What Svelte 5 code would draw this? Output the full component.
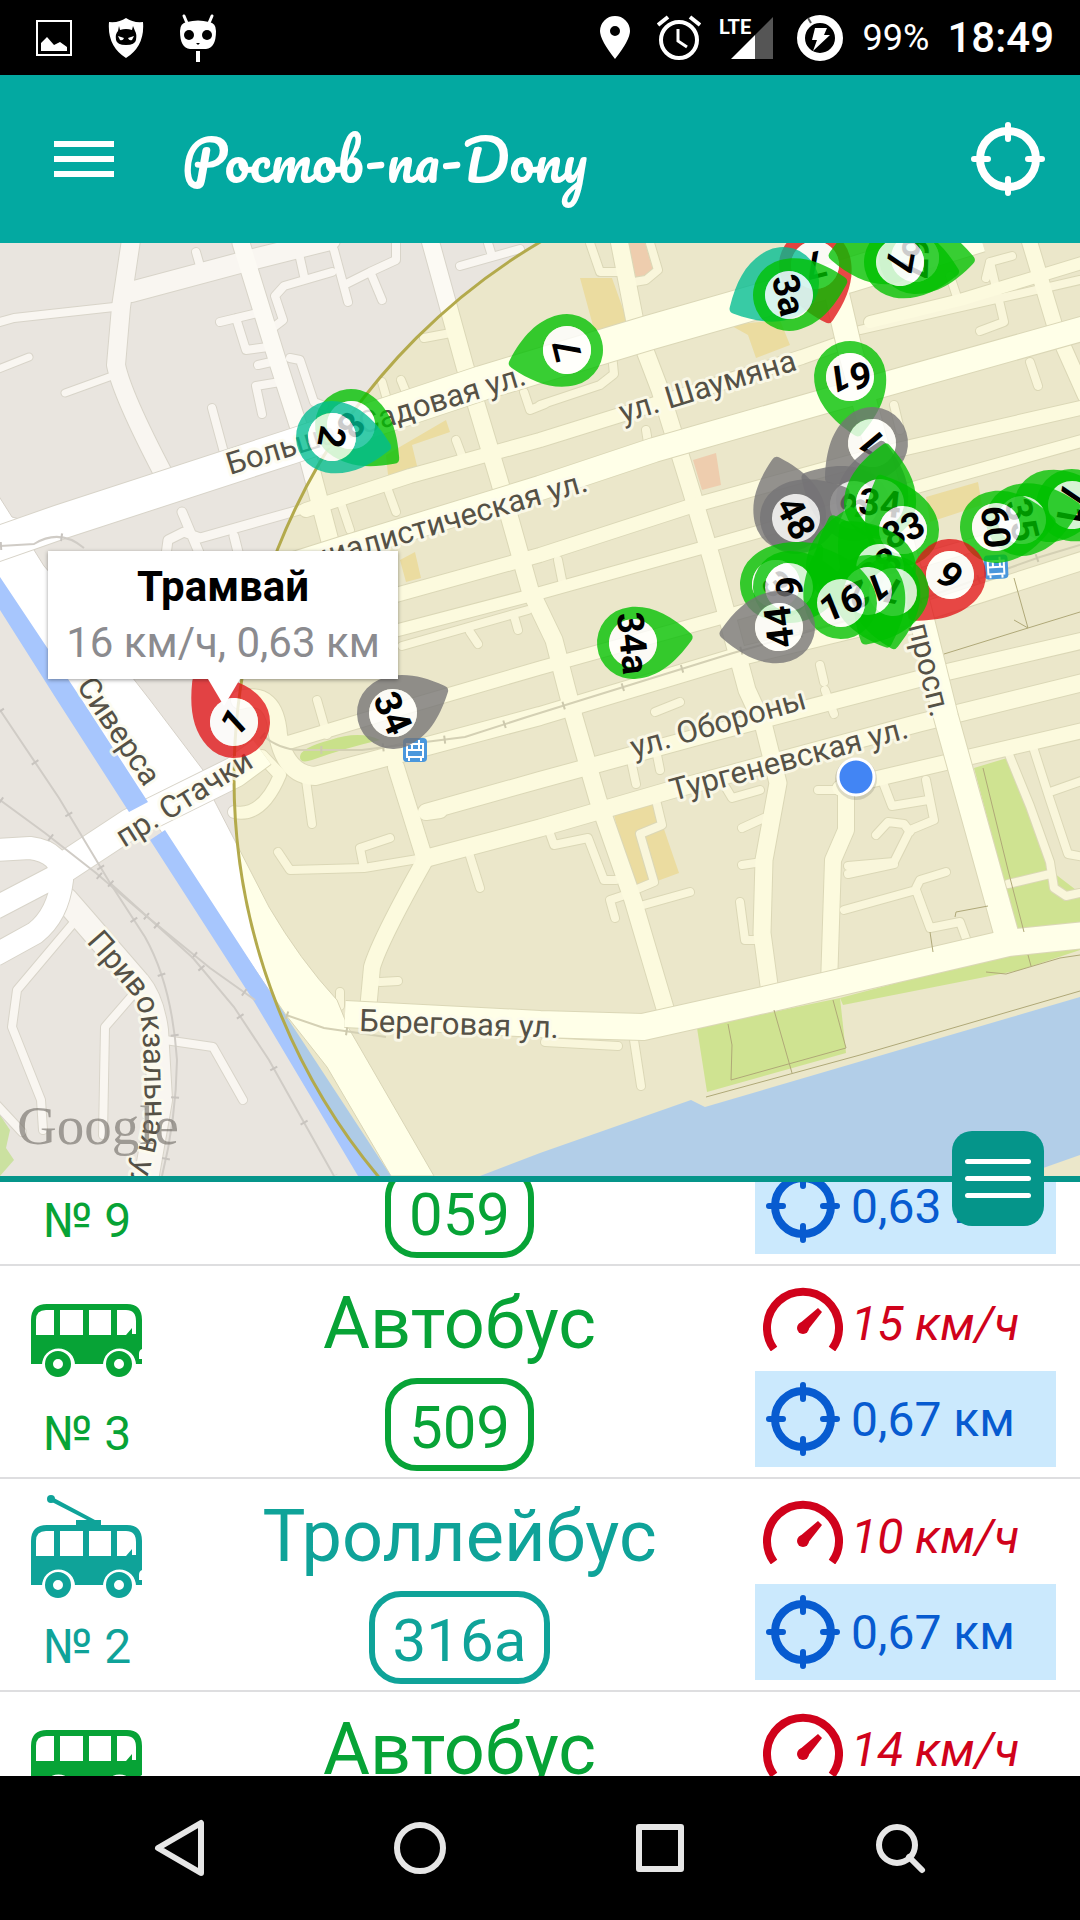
<script>
	import { onMount } from 'svelte'

	let list

	let rows = [
		{id: 1, type: "bus", name: "Автобус", number: 9, board: "059", speed: 16, distance: "0,63"},
		{id: 2, type: "bus", name: "Автобус", number: 3, board: "509", speed: 15, distance: "0,67"},
		{id: 3, type: "trolley", name: "Троллейбус", number: 2, board: "316а", speed: 10, distance: "0,67"},
		{id: 4, type: "bus", name: "Автобус", number: 3, board: "059", speed: 14, distance: "0,67"},
	]

	// streets: k is the class, w the width, d the centre line
	let streets = [
		{k: "minor", w: 8, d: "M0 322 L14 318 L114 307"},
		{k: "minor", w: 7, d: "M-4 370 L29 357 M65 393 L112 376"},
		{k: "minor", w: 8, d: "M196 252 L200 266 M212 408 L226 460 M220 322 L262 312 M236 318 L246 350 L268 347"},
		{k: "minor", w: 8, d: "M270 330 L283 320 L275 296 L284 286 L332 272 M300 258 L304 276 M334 250 L348 302 M346 284 L370 272 L396 260 L396 243 M372 276 L382 300"},
		{k: "minor", w: 8, d: "M258 365 L280 360 M262 414 L256 386 L280 382 M290 358 L300 360 L314 402 L324 406"},
		{k: "minor", w: 8, d: "M460 266 L520 249 M488 243 L492 256 M424 338 L456 332 M382 382 L390 410 M401 380 L410 402"},
		{k: "minor", w: 9, d: "M166 555 L168 540 L184 532 L200 538 L310 507 M182 512 L200 555 M234 536 L240 560"},
		{k: "minor", w: 8, d: "M342 506 L350 530 M388 490 L396 512 M456 440 L462 456 M524 392 L530 410 L545 404"},
		{k: "minor", w: 8, d: "M402 646 L528 610 M470 632 L478 644 M514 616 L518 630 M317 700 L327 735"},
		{k: "minor", w: 8, d: "M76 920 L17 990 L12 1027 L41 1100 L43 1130 M131 997 L105 1027 L103 1135 M165 1040 L213 1047 L243 1100 M-4 1104 L22 1132"},
		{k: "minor", w: 8, d: "M278 852 L290 870 L364 868 L424 858 M364 868 L360 848 L390 838 M306 780 L312 824 M470 856 L480 888 M380 982 L398 981 M340 992 L340 1006"},
		{k: "minor", w: 8, d: "M590 243 L600 272 L618 272 M650 243 L658 270 L646 280 L634 282 M540 405 L600 385 L614 374 L612 354 M646 430 L650 455 M558 560 L562 580"},
		{k: "minor", w: 8, d: "M860 330 L1080 280 M950 276 L958 300 M986 278 L990 262 L1012 256 M990 262 L1004 322 L980 331 M1030 362 L1038 386 M894 405 L900 430"},
		{k: "minor", w: 8, d: "M820 665 L824 682 M825 690 L834 714 M655 712 L680 702 M630 756 L636 784 M656 750 L660 770"},
		{k: "minor", w: 8, d: "M548 828 L554 845 L588 838 L604 880 L616 880 M656 800 L662 825 L640 834 L654 882 L630 892 M640 906 L690 892 M615 918 L610 900 L622 896"},
		{k: "minor", w: 8, d: "M726 788 L732 798 L760 790 M742 828 L764 818 M742 865 L762 862 M740 902 L745 940 L760 940 M818 790 L842 790"},
		{k: "minor", w: 8, d: "M884 785 L892 806 L928 800 M926 780 L934 820 L910 830 L894 862 L848 866 M876 835 L888 822 L904 824 L910 832 M848 874 L894 864"},
		{k: "minor", w: 8, d: "M844 910 L916 890 L930 928 L960 922 L968 944 M916 888 L920 880 L946 872"},
		{k: "minor", w: 8, d: "M1008 752 L1030 806 L1050 862 L1054 888 L1066 896 L1080 893 M1034 750 L1050 800 L1068 854 L1084 857 M1050 792 L1084 780 M1008 884 L1050 874"},
		{k: "minor", w: 8, d: "M545 1042 L618 1046 M634 1040 L641 1086"},
		{k: "minor", w: 24, d: "M66 900 L86 923 L138 983 Q152 1000 156 1030 L160 1100 L146 1180"},
		{k: "minor", w: 20, d: "M131 292 L258 258 L330 240"},
		{k: "minor", w: 18, d: "M131 240 L121 307 L116 365 Q122 395 164 475"},
		{k: "street", w: 17, d: "M241 243 L275 353 L306 450 L335 560"},
		{k: "street", w: 17, d: "M430 240 L465 367 L499 480 L530 590 L554 640 L574 717 L598 800 L633 900 L667 1015"},
		{k: "street", w: 17, d: "M619 240 L636 327 L660 390 L691 490 L712 560 L747 690 L764 727 L778 783 L764 860 L762 933 L771 1000"},
		{k: "street", w: 15, d: "M1029 240 L1056 330 L1085 395"},
		{k: "street", w: 16, d: "M846 790 L846 830 L833 860 L829 985"},
		{k: "street", w: 16, d: "M396 767 L425 860 Q380 940 372 967 L368 1010"},
		{k: "street", w: 14, d: "M306 510 L410 476 L540 440 L678 397 L802 357 L850 340"},
		{k: "street", w: 14, d: "M385 598 L540 555 L688 507 L884 453 L1085 407"},
		{k: "street", w: 12, d: "M360 640 L540 593 L705 547 L870 500 L1085 440"},
		{k: "street", w: 13, d: "M280 745 L413 705 L540 668 L730 615 L922 560 L1085 512"},
		{k: "street", w: 16, d: "M440 810 L426 812 L540 780 L712 733 L930 676 L1085 640"},
		{k: "street", w: 17, d: "M427 858 L540 828 L671 790 L919 723 L1085 682"},
		{k: "street", w: 15, d: "M840 788 L871 780 L1085 730"},
		{k: "street", w: 18, d: "M240 700 Q275 690 278 735 Q286 775 315 776 L540 716 L733 658 L919 613 L1085 560"},
		{k: "street", w: 12, d: "M234 812 Q262 818 280 775 L262 756"},
		{k: "street", w: 12, d: "M1085 262 L960 300 L870 322"},
		{k: "major", w: 24, d: "M836 290 L850 350 L884 473 L922 620 L946 717 L1008 940"},
		{k: "major", w: 24, d: "M250 578 L345 548 L540 488 L654 450 L829 400 L1085 328"},
		{k: "major", w: 26, d: "M345 1014 L540 1024 L643 1027 L764 1000 L1008 943 L1085 935"},
		{k: "major", w: 34, d: "M-20 550 L60 522 L290 447 L482 383 L648 333 L850 275 L980 235"},
		{k: "major", w: 30, d: "M262 752 L235 772 L130 824 L60 870"},
		{k: "major", w: 22, d: "M-5 850 L30 848 Q62 852 62 880 Q58 915 35 933 L-5 955 M-5 908 L60 874"},
	]

	let footpaths = "M728 1024 L732 1045 L731 1080 L846 1048 L833 1000 M774 1010 L792 1073 M706 1097 L860 1055 L1080 991 M983 768 L1008 870 L1024 932 M1028 955 L1031 966 M1014 620 L1028 628 M1014 578 L1028 628 L1080 612 M1028 628 L944 654 M930 932 L933 952 M955 917 L956 912 L988 906 M986 972 L1006 974 L1060 958 L1080 955"

	let rails = [
		"M0 710 L59 798 L110 883 L145 937 Q172 985 177 1060 Q176 1120 162 1176",
		"M0 800 L45 833 L96 873 L145 915 L210 968 L255 1000",
		"M110 883 L193 958 L234 1007 L269 1060 L334 1176",
		"M286 1015 L324 1028 L386 1037",
		"M0 546 L34 544 Q60 528 84 548",
		"M262 735 Q280 750 300 750 L362 750 L465 737 L527 717 L588 698 L733 653 L919 600 L1040 557 L1080 545",
	]

	let labels = [
		{x: 230, y: 475, rot: -17, text: "Большая Садовая ул."},
		{x: 278, y: 580, rot: -16, text: "Социалистическая ул."},
		{x: 623, y: 423, rot: -17, text: "ул. Шаумяна"},
		{x: 634, y: 758, rot: -16, text: "ул. Обороны"},
		{x: 673, y: 801, rot: -15, text: "Тургеневская ул."},
		{x: 908, y: 626, rot: 76, text: "просп."},
		{x: 359, y: 1031, rot: 2, text: "Береговая ул."},
		{x: 76, y: 686, rot: 56, text: "Сиверса"},
		{x: 124, y: 848, rot: -32, text: "пр. Стачки"},
	]

	let green = "#00c000"
	let grey = "#757376"
	let red = "#e01518"
	let teal = "#00bd92"

	// pins are drawn in this order, later ones on top
	let pins = [
		{x: 351, y: 425, rot: 128, color: green, text: "8"},
		{x: 332, y: 437, rot: 100, color: teal, text: "2"},
		{x: 567, y: 350, rot: -104, color: green, text: "7"},
		{x: 815, y: 265, rot: 166, color: red, text: "7"},
		{x: 783, y: 283, rot: -118, color: teal, text: ""},
		{x: 789, y: 295, rot: 76, color: green, text: "3а"},
		{x: 888, y: 248, rot: -98, color: green, text: ""},
		{x: 915, y: 258, rot: 92, color: green, text: "67"},
		{x: 900, y: 262, rot: 100, color: green, text: "7"},
		{x: 850, y: 377, rot: 172, color: green, text: "61"},
		{x: 872, y: 443, rot: -130, color: grey, text: "1"},
		{x: 872, y: 500, rot: 10, color: grey, text: ""},
		{x: 854, y: 505, rot: -60, color: grey, text: "3"},
		{x: 790, y: 515, rot: -14, color: grey, text: ""},
		{x: 796, y: 518, rot: 62, color: grey, text: "48"},
		{x: 880, y: 503, rot: 6, color: green, text: "34"},
		{x: 903, y: 530, rot: -24, color: green, text: "83"},
		{x: 1050, y: 506, rot: 80, color: green, text: ""},
		{x: 1072, y: 505, rot: 100, color: green, text: "71"},
		{x: 1022, y: 520, rot: 76, color: green, text: "35"},
		{x: 996, y: 527, rot: 84, color: green, text: "60"},
		{x: 950, y: 575, rot: -138, color: red, text: "6"},
		{x: 842, y: 566, rot: 10, color: green, text: ""},
		{x: 852, y: 572, rot: -20, color: green, text: ""},
		{x: 880, y: 568, rot: -40, color: green, text: "38"},
		{x: 776, y: 584, rot: 50, color: green, text: "3"},
		{x: 789, y: 587, rot: 88, color: green, text: "6"},
		{x: 884, y: 590, rot: 170, color: green, text: ""},
		{x: 893, y: 592, rot: -150, color: green, text: "1"},
		{x: 868, y: 591, rot: 160, color: green, text: "12"},
		{x: 841, y: 603, rot: -22, color: green, text: "16"},
		{x: 779, y: 627, rot: -97, color: grey, text: "44"},
		{x: 633, y: 643, rot: 84, color: green, text: "34а"},
		{x: 393, y: 713, rot: 66, color: grey, text: "34"},
		{x: 234, y: 722, rot: -42, color: red, text: "1"},
	]

	let pinShape = "M-4 -58 Q0 -62 4 -58 C24 -40 36 -22 36 0 A36 36 0 1 1 -36 0 C-36 -22 -24 -40 -4 -58Z"
	let pinHole = "M24 0 A24 24 0 1 0 -24 0 A24 24 0 1 0 24 0Z"

	onMount(() => {
		list.scrollTop = 129
	})
</script>

{#snippet crosshair()}
	<svg class="crosshair" viewBox="0 0 76 76" aria-hidden="true">
		<circle cx="38" cy="38" r="28" />
		<path d="M38 4 V18 M38 58 V72 M4 38 H18 M58 38 H72" />
	</svg>
{/snippet}

<div class="screen">
	<div class="status">
		<div class="status-left">
			<svg width="36" height="40" viewBox="0 0 36 40">
				<rect x="1" y="3" width="34" height="34" fill="none" stroke="#fff" stroke-width="2" />
				<path d="M5 33 V25 L11 19 L18 27 L24 24 L31 29 V33Z" fill="#fff" />
			</svg>
			<svg width="36" height="40" viewBox="0 0 36 40">
				<path d="M18 0 Q25 5 35 4 Q37 28 18 40 Q-1 28 1 4 Q11 5 18 0Z" fill="#fff" />
				<path d="M11 8 L12 12 Q18 10 24 12 L25 8 L27 13 Q29 16 28 22 Q27 27 18 27 Q9 27 8 22 Q7 16 10 13Z" />
				<path d="M10 18 L16 20 Q15 23 12 22Z M26 18 L20 20 Q21 23 24 22Z" fill="#fff" />
			</svg>
			<svg width="36" height="48" viewBox="0 0 36 48">
				<path d="M4 2 L7 9 M32 2 L29 9" stroke="#fff" stroke-width="3" stroke-linecap="round" />
				<path d="M7 8 Q18 5 29 8 Q36 9 36 17 Q36 34 26 35 H10 Q0 34 0 17 Q0 9 7 8Z M16 37 H20 V48 H16Z" fill="#fff" />
				<circle cx="9" cy="21" r="5" />
				<circle cx="27" cy="21" r="5" />
				<path d="M16 29 H20 L18 31Z" />
			</svg>
		</div>
		<div class="status-right">
			<svg width="44" height="46" viewBox="0 0 44 46">
				<path d="M20 1 A15 15 0 0 1 35 16 Q35 25 20 44 Q5 25 5 16 A15 15 0 0 1 20 1Z M20 11 A5 5 0 1 0 20 21 A5 5 0 1 0 20 11Z" fill="#fff" fill-rule="evenodd" />
			</svg>
			<svg width="44" height="46" viewBox="0 0 44 46" fill="none" stroke="#fff" stroke-width="4">
				<circle cx="22" cy="25" r="18" />
				<path d="M1 10 L11 2 M43 10 L33 2" />
				<path d="M21 14 V26 L30 32" stroke-width="3" />
			</svg>
			<svg width="58" height="46" viewBox="0 0 58 46">
				<path d="M54 2 V44 H36 V20Z" fill="#555" />
				<path d="M36 20 V44 H12Z" fill="#fff" />
				<text x="0" y="19" class="lte">LTE</text>
			</svg>
			<svg width="50" height="48" viewBox="0 0 50 48">
				<circle cx="25" cy="24" r="19" fill="none" stroke="#fff" stroke-width="8" />
				<path d="M13 4 L16 9" stroke="#555" stroke-width="2" />
				<path d="M20 14 H32 L29 21 H35 L18 37 L22 26 H17Z" fill="#fff" />
			</svg>
			<span class="percent">99%</span>
			<span class="time">18:49</span>
		</div>
	</div>

	<header>
		<button class="menu" aria-label="Меню"><i></i><i></i><i></i></button>
		<h1>Pocmob-na-Dony</h1>
		<button class="locate" aria-label="Моё местоположение">{@render crosshair()}</button>
	</header>

	<div class="map">
		<svg class="canvas" viewBox="0 243 1080 933">
			<rect x="0" y="243" width="1080" height="933" fill="#e9e5df" />
			<g fill="#e9d9b0">
				<path d="M614 815 L655 803 L679 873 L633 890Z" />
				<path d="M580 278 H612 L628 323 L595 333Z" />
				<path d="M730 325 L780 320 L790 345 L756 358 L748 335Z" />
				<path d="M926 497 L978 482 L982 505 L930 522Z" />
				<path d="M386 455 L446 420 L450 432 L412 445 L418 470 L388 475Z" />
				<path d="M400 560 L415 552 L421 578 L406 582Z" />
			</g>
			<g fill="#edc9c0">
				<path d="M626 243 H645 L654 272 L636 278Z" />
				<path d="M693 460 L716 453 L721 485 L702 490Z" />
			</g>
			<g fill="#cbe1a0">
				<path d="M697 1028 L840 998 L846 1053 L707 1092Z" />
				<path d="M840 998 L1022 950 L1080 942 V950 L1020 970 L843 1005Z" />
				<path d="M974 768 L1007 758 L1050 870 L1080 893 V929 L1018 934Z" />
				<path d="M0 1115 L10 1130 L6 1148 L14 1160 L0 1176Z" />
			</g>
			<path d="M480 1176 L540 1153 L691 1100 L705 1107 L1080 997 V1155 L1046 1167 L1020 1176Z" fill="#abcaff" />

			{#each streets.filter((s) => s.k != "major") as s}
				<path d={s.d} class="casing" stroke-width={s.w + 2} />
			{/each}
			{#each streets.filter((s) => s.k != "major") as s}
				<path d={s.d} class={s.k} stroke-width={s.w} />
			{/each}
			<path d="M-5 490 L12 517 L60 530 L34 550 L44 566 L58 582 L150 700 L203 770 L214 800 L269 907 Q300 960 337 1000 L348 1027 L434 1176 H391 L327 1067 L286 1015 L160 830 L128 775 L60 670 L-5 575Z" fill="#fff" stroke="#d6d1c8" />
			{#each streets.filter((s) => s.k == "major") as s}
				<path d={s.d} class="casing blunt" stroke-width={s.w + 2} />
			{/each}
			{#each streets.filter((s) => s.k == "major") as s}
				<path d={s.d} class="major" stroke-width={s.w} />
			{/each}
			<path d="M0 577 L82 700 L148 802 L129 812 L57 700 L0 610Z M165 830 L269 990 L391 1176 H358 L255 1003 L150 840Z" fill="#a7c6fd" />
			<path d="M300 757 Q300 748 330 740 Q360 730 380 740 Q345 748 312 760 Q300 764 300 757Z" fill="#c4df98" />
			<path d={footpaths} fill="none" stroke="#a8a084" />
			{#each rails as d}
				<path {d} class="rail" />
				<path {d} class="sleepers" />
			{/each}

			<circle cx="856" cy="778" r="622" fill="#ff0" fill-opacity=".09" stroke="#b3aa4c" stroke-width="3" />

			<g class="labels">
				{#each labels as label}
					<text transform="translate({label.x} {label.y}) rotate({label.rot})">{label.text}</text>
				{/each}
				<path id="station-street" d="M86 942 L128 990 Q142 1005 143 1040 L145 1110 Q144 1140 122 1200" fill="none" stroke="none" />
				<text><textPath href="#station-street">Привокзальная ул</textPath></text>
			</g>

			<text x="17" y="1144" class="google">Google</text>

			{#each [[415, 750, 0], [996, 567, -3]] as stop}
				<g transform="translate({stop[0]} {stop[1]}) rotate({stop[2]})">
					<rect x="-12" y="-12" width="24" height="24" rx="4" fill="#4a97dc" />
					<path d="M-8 -6 V7 H8 V-6Z M-8 0 H8 M-3 -6 V0 M4 -10 V0 M-6 8 V11 M6 8 V11" fill="none" stroke="#fff" stroke-width="2" />
				</g>
			{/each}

			{#each pins as pin}
				<g transform="translate({pin.x} {pin.y}) rotate({pin.rot})">
					{#if pin.text}
						<path d="{pinShape} {pinHole}" fill={pin.color} fill-opacity=".78" fill-rule="evenodd" />
						<circle r="24" fill="#fff" fill-opacity=".8" />
						<text y="13" class="pin-text">{pin.text}</text>
					{:else}
						<path d={pinShape} fill={pin.color} fill-opacity=".78" />
					{/if}
				</g>
			{/each}

			<circle cx="856" cy="779" r="21" fill="#000" fill-opacity=".12" />
			<circle cx="856" cy="777" r="18" fill="#4285f4" stroke="#fff" stroke-width="3" />
		</svg>

		<div class="info">
			<strong>Трамвай</strong>
			<span>16 км/ч, 0,63 км</span>
		</div>
	</div>

	<div class="divider">
		<button class="handle" aria-label="Список"><i></i><i></i><i></i></button>
	</div>

	<ul class="list" bind:this={list}>
		{#each rows as row (row.id)}
			<li class={row.type}>
				<div class="vehicle">
					<svg width="112" height="104" viewBox="0 0 112 104" aria-hidden="true">
						<g transform="translate(0 {row.type == 'trolley' ? 30 : 22})">
							{#if row.type == "trolley"}
								<path d="M45 1 V-5 H56 L19 -24 L21 -28 L64 -5 H70 V1Z" />
								<circle cx="20" cy="-26" r="4" />
							{/if}
							<path fill-rule="evenodd" d="M0 60 V16 Q0 0 16 0 H96 Q111 0 111 16 V45 Q108 46 108 50 V55 H111 V60Z M5 31 H23 V6 H15 Q5 6 5 16Z M29 6 V31 H52 V6Z M58 6 V31 H80 V6Z M86 6 V31 H95 L101 24 V30 H105 V17 Q105 6 95 6Z" />
							<path d="M11 61 A16 16 0 0 1 44 61Z M72 61 A16 16 0 0 1 105 61Z" fill="#fff" />
							<path fill-rule="evenodd" d="M27 47 A13 13 0 1 0 27 73 A13 13 0 1 0 27 47Z M27 55 A5 5 0 1 1 27 65 A5 5 0 1 1 27 55Z M88 47 A13 13 0 1 0 88 73 A13 13 0 1 0 88 47Z M88 55 A5 5 0 1 1 88 65 A5 5 0 1 1 88 55Z" />
						</g>
					</svg>
					<span>№ {row.number}</span>
				</div>
				<div class="route">
					<h2>{row.name}</h2>
					<span class="board">{row.board}</span>
				</div>
				<div class="data">
					<div class="speed">
						<svg width="80" height="64" viewBox="0 0 80 64" aria-hidden="true">
							<path d="M11 62 A36 36 0 1 1 69 62" fill="none" stroke="currentColor" stroke-width="8" />
							<path d="M36 37 L55 21 L59 25 L44 44Z" fill="currentColor" />
							<circle cx="40" cy="41" r="6" fill="currentColor" />
						</svg>
						<em>{row.speed} км/ч</em>
					</div>
					<div class="distance">
						{@render crosshair()}
						<span>{row.distance} км</span>
					</div>
				</div>
			</li>
		{/each}
	</ul>

	<nav>
		<button aria-label="Назад">
			<svg width="56" height="60" viewBox="0 0 56 60"><path d="M49 5 V55 L6 30Z" /></svg>
		</button>
		<button aria-label="Домой">
			<svg width="56" height="60" viewBox="0 0 56 60"><circle cx="28" cy="30" r="23" /></svg>
		</button>
		<button aria-label="Недавние">
			<svg width="56" height="60" viewBox="0 0 56 60"><rect x="7" y="9" width="42" height="42" /></svg>
		</button>
		<button aria-label="Поиск">
			<svg width="56" height="60" viewBox="0 0 56 60"><circle cx="25" cy="27" r="18" /><path d="M37 39 L50 52" /></svg>
		</button>
	</nav>
</div>

<style>
	:global(body) {
		margin: 0;
		background: #000;
	}

	.screen {
		display: flex;
		flex-direction: column;
		height: 100vh;
		background: #fff;
		font-family: Roboto, "Liberation Sans", sans-serif;
	}

	button {
		padding: 0;
		border: none;
		background: none;
		cursor: pointer;
	}

	.status {
		display: flex;
		flex: none;
		justify-content: space-between;
		align-items: center;
		height: 75px;
		padding: 0 26px 0 36px;
		background: #000;
		color: #fff;
	}

	.status-left, .status-right {
		display: flex;
		align-items: center;
	}

	.status-left {
		gap: 36px;
	}

	.status-right {
		gap: 18px;
	}

	.lte {
		fill: #fff;
		font-size: 20px;
		font-weight: 700;
	}

	.percent {
		font-size: 36px;
	}

	.time {
		font-size: 42px;
		font-weight: 500;
	}

	header {
		display: flex;
		flex: none;
		align-items: center;
		height: 168px;
		padding: 0 34px 0 54px;
		background: #03a9a1;
		color: #fff;
	}

	h1 {
		flex: 1;
		margin: 0 0 0 68px;
		font-family: Pacifico, "Liberation Serif", cursive;
		font-size: 56px;
		font-weight: 400;
		line-height: 80px;
	}

	.menu {
		display: flex;
		flex-direction: column;
		gap: 9px;
		width: 60px;
	}

	.menu i {
		height: 6px;
		background: #fff;
	}

	.locate {
		color: #fff;
	}

	.crosshair {
		display: block;
		width: 76px;
		height: 76px;
		fill: none;
		stroke: currentColor;
		stroke-width: 8;
	}

	.crosshair path {
		stroke-width: 6;
		stroke-linecap: round;
	}

	.map {
		position: relative;
		flex: none;
		overflow: hidden;
	}

	.canvas {
		display: block;
		width: 100%;
	}

	.casing, .minor, .street, .major {
		fill: none;
		stroke-linejoin: round;
		stroke-linecap: round;
	}

	.casing {
		stroke: #d8d4c9;
	}

	.minor {
		stroke: #f9f6f1;
	}

	.street {
		stroke: #fcfaf4;
	}

	.major {
		stroke: #fff;
	}

	.blunt, .major {
		stroke-linecap: butt;
	}

	.rail {
		fill: none;
		stroke: #d0ccc6;
		stroke-width: 2;
	}

	.sleepers {
		fill: none;
		stroke: #c8c4bf;
		stroke-width: 8;
		stroke-dasharray: 2 60;
	}

	.labels {
		fill: #555146;
		stroke: #fdfcee;
		stroke-opacity: .8;
		stroke-width: 6px;
		stroke-linejoin: round;
		paint-order: stroke;
		font-size: 31px;
	}

	.google {
		fill: #77716b;
		fill-opacity: .65;
		font-family: "Liberation Serif", serif;
		font-size: 55px;
	}

	.pin-text {
		font-size: 37px;
		font-weight: 700;
		text-anchor: middle;
	}

	.info {
		position: absolute;
		top: 33%;
		left: 48px;
		display: flex;
		flex-direction: column;
		align-items: center;
		box-sizing: border-box;
		width: 350px;
		padding: 12px 0 4px;
		background: #fff;
		box-shadow: 0 1px 4px rgba(0, 0, 0, .4);
	}

	.info::after {
		content: "";
		position: absolute;
		top: 100%;
		left: 160px;
		border: 16px solid transparent;
		border-top: 27px solid #fff;
		border-bottom: none;
	}

	.info strong {
		font-size: 42px;
		line-height: 48px;
	}

	.info span {
		color: #8b8b8f;
		font-size: 42px;
		line-height: 64px;
	}

	.divider {
		position: relative;
		z-index: 1;
		flex: none;
		height: 6px;
		background: #05958a;
	}

	.handle {
		position: absolute;
		top: -45px;
		right: 36px;
		display: flex;
		flex-direction: column;
		justify-content: center;
		gap: 12px;
		width: 92px;
		height: 95px;
		padding: 0 13px;
		border-radius: 20px;
		background: #05958a;
	}

	.handle i {
		height: 5px;
		border-radius: 3px;
		background: #fff;
	}

	.list {
		flex: 1;
		min-height: 0;
		margin: 0;
		padding: 0;
		overflow-y: auto;
		scrollbar-width: none;
		list-style: none;
	}

	li {
		display: grid;
		grid-template-columns: 174px 1fr 301px;
		padding: 8px 24px 6px 0;
		border-bottom: 2px solid #dedee0;
	}

	.bus {
		color: #07a336;
		fill: #07a336;
	}

	.trolley {
		color: #0fa399;
		fill: #0fa399;
	}

	.vehicle, .route {
		display: flex;
		flex-direction: column;
		align-items: center;
		padding-top: 8px;
	}

	.vehicle {
		gap: 20px;
		font-size: 48px;
		line-height: 56px;
	}

	.route {
		gap: 12px;
		padding-right: 10px;
	}

	.data {
		padding-top: 1px;
	}

	h2 {
		margin: 0;
		font-size: 72px;
		font-weight: 400;
		line-height: 84px;
	}

	.board {
		padding: 6px 18px 0;
		border: 6px solid;
		border-radius: 32px;
		font-size: 60px;
		line-height: 75px;
	}

	.speed, .distance {
		display: flex;
		align-items: center;
		height: 96px;
		font-size: 48px;
	}

	.speed {
		gap: 8px;
		padding-left: 8px;
		color: #d0021b;
	}

	.speed svg {
		margin-bottom: 8px;
	}

	.distance {
		gap: 10px;
		padding-left: 10px;
		background: #cbe9fd;
		color: #075bd0;
	}

	nav {
		display: flex;
		flex: none;
		height: 144px;
		padding: 0 60px;
		background: #000;
	}

	nav button {
		display: flex;
		flex: 1;
		justify-content: center;
		align-items: center;
	}

	nav svg {
		fill: none;
		stroke: #e6e6e6;
		stroke-width: 6;
		stroke-linejoin: round;
		stroke-linecap: round;
	}
</style>
